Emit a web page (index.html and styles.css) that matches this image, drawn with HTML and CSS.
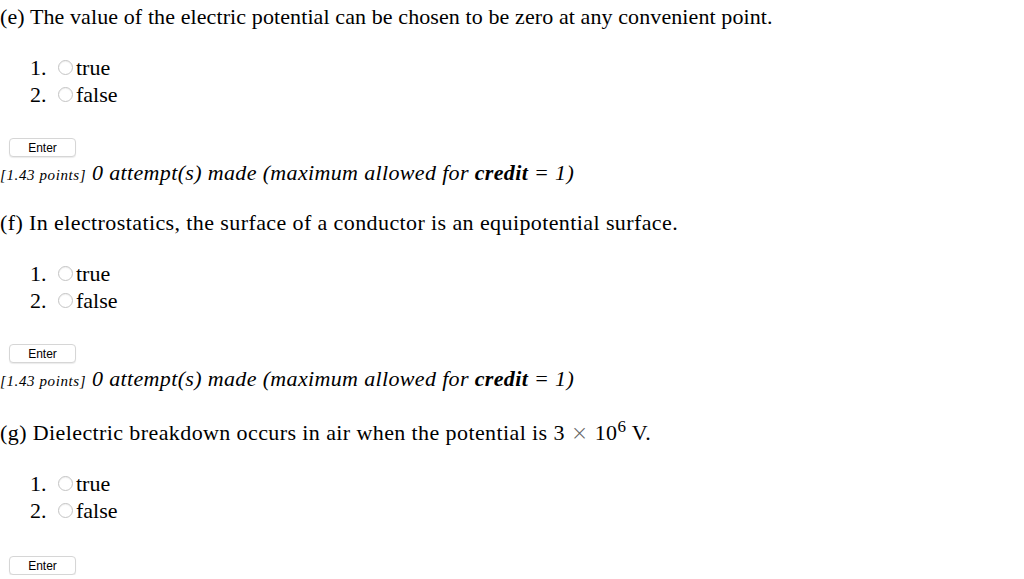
FILE: index.html
```html
<!DOCTYPE html>
<html>
<head>
<meta charset="utf-8">
<link rel="stylesheet" href="styles.css">
</head>
<body>
<div class="q">
  <p class="stem stem-e">(e) The value of the electric potential can be chosen to be zero at any convenient point.</p>
  <ol class="opts">
    <li><span class="radio"></span>true</li>
    <li><span class="radio"></span>false</li>
  </ol>
  <div class="btnrow"><button class="enter">Enter</button></div>
  <div class="status"><span class="pts">[1.43 points]</span> 0 attempt(s) made (maximum allowed for <b>credit</b> = 1)</div>
</div>
<div class="q">
  <p class="stem stem-f">(f) In electrostatics, the surface of a conductor is an equipotential surface.</p>
  <ol class="opts">
    <li><span class="radio"></span>true</li>
    <li><span class="radio"></span>false</li>
  </ol>
  <div class="btnrow"><button class="enter">Enter</button></div>
  <div class="status"><span class="pts">[1.43 points]</span> 0 attempt(s) made (maximum allowed for <b>credit</b> = 1)</div>
</div>
<div class="q q-last">
  <p class="stem stem-g">(g) Dielectric breakdown occurs in air when the potential is 3 <span class="times">×</span> 10<sup>6</sup> V.</p>
  <ol class="opts">
    <li><span class="radio"></span>true</li>
    <li><span class="radio"></span>false</li>
  </ol>
  <div class="btnrow"><button class="enter">Enter</button></div>
</div>
</body>
</html>
```
FILE: styles.css
```css
html, body {
  margin: 0;
  padding: 0;
  background: #fff;
}
body {
  font-family: "Liberation Serif", "Times New Roman", serif;
  font-size: 22px;
  color: #000;
}
.q {
  height: 206px;
}
.q-last {
  height: auto;
}
.stem {
  margin: 0;
  padding-top: 4px;
  line-height: 26px;
  white-space: nowrap;
}
.stem-e { letter-spacing: 0.1px; }
.stem-f { letter-spacing: 0.4px; }
.stem-g { letter-spacing: 0.4px; padding-top: 8px; }
.opts {
  margin: 24px 0 0 0;
  padding-left: 54px;
  line-height: 27px;
  list-style: none;
  counter-reset: n;
}
.stem-g + .opts {
  margin-top: 24px;
}
.opts li {
  display: flex;
  align-items: center;
  position: relative;
  counter-increment: n;
}
.opts li::before {
  content: counter(n) ".";
  position: absolute;
  left: -24px;
}
.radio {
  display: inline-block;
  width: 15px;
  height: 15px;
  border: 1px solid #c4c4c4;
  border-radius: 50%;
  margin: 0 3px 0 4px;
  background: #fff;
  box-sizing: border-box;
  box-shadow: inset 0 1px 1px rgba(0,0,0,0.06);
}
.btnrow {
  margin-top: 30px;
  padding-left: 9px;
  display: flex;
}
.q-last .btnrow {
  margin-top: 32px;
}
.enter {
  font-family: "Liberation Sans", Arial, sans-serif;
  font-size: 12px;
  width: 67px;
  height: 19px;
  padding: 0;
  background: #fff;
  border: 1px solid #d6d6d6;
  border-radius: 4px;
  color: #000;
  box-shadow: 0 1px 1px rgba(0,0,0,0.08);
}
.status {
  font-style: italic;
  margin-top: 3px;
  line-height: 26px;
  letter-spacing: 0.35px;
  white-space: nowrap;
}
.status .pts {
  font-size: 15px;
  letter-spacing: 0.6px;
}
.status b {
  font-weight: bold;
}
.times {
  color: #666;
  font-size: 21px;
  font-family: "DejaVu Sans", sans-serif;
  font-weight: 300;
  line-height: 0;
}
sup {
  font-size: 17px;
  line-height: 0;
}
```
